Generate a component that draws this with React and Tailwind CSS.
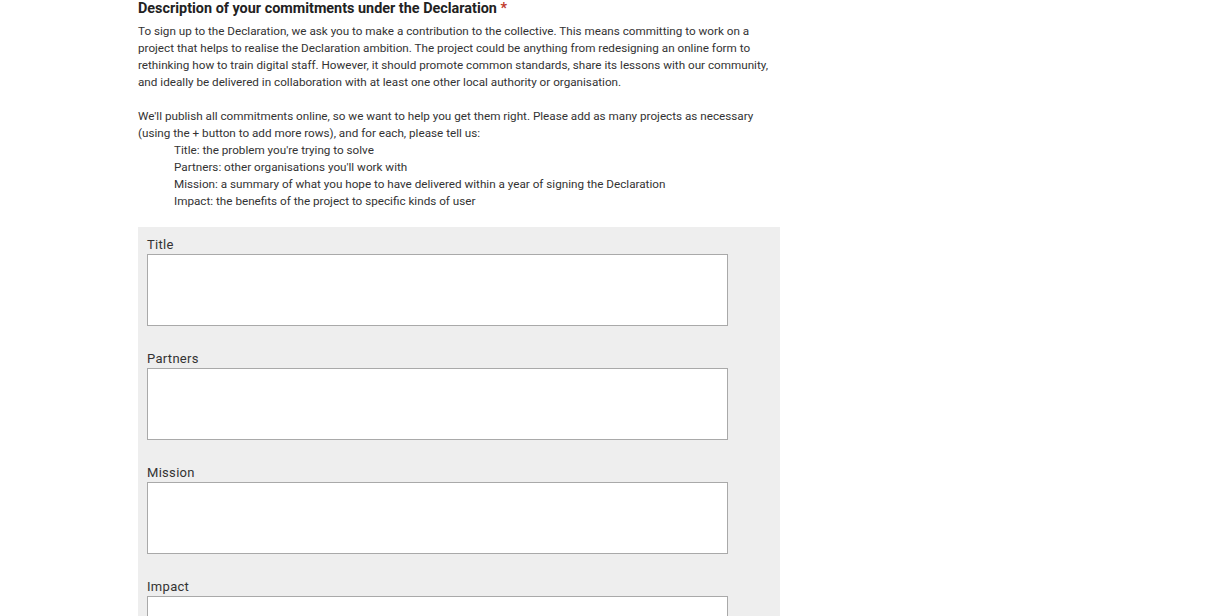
const intro = [
  'To sign up to the Declaration, we ask you to make a contribution to the collective. This means committing to work on a',
  'project that helps to realise the Declaration ambition. The project could be anything from redesigning an online form to',
  'rethinking how to train digital staff. However, it should promote common standards, share its lessons with our community,',
  'and ideally be delivered in collaboration with at least one other local authority or organisation.',
];

const publish = [
  "We'll publish all commitments online, so we want to help you get them right. Please add as many projects as necessary",
  '(using the + button to add more rows), and for each, please tell us:',
];

const items = [
  "Title: the problem you're trying to solve",
  "Partners: other organisations you'll work with",
  'Mission: a summary of what you hope to have delivered within a year of signing the Declaration',
  'Impact: the benefits of the project to specific kinds of user',
];

const fields = ['Title', 'Partners', 'Mission', 'Impact'];

export default function App() {
  return (
    <div className="h-[616px] overflow-hidden bg-white pl-[138px] font-['Roboto',sans-serif] text-[#333333]">
      <div className="w-[642px]">
        <h2 className="pt-[1px] text-[14.4px] leading-[16px] font-bold text-[#222222]">
          Description of your commitments under the Declaration <span className="text-[#c0392b]">*</span>
        </h2>
        <div className="mt-[5.5px] text-[11.7px] leading-[17px] whitespace-nowrap">
          {intro.map((l) => (
            <div key={l}>{l}</div>
          ))}
          <div className="h-[17px]" />
          {publish.map((l) => (
            <div key={l}>{l}</div>
          ))}
          {items.map((l) => (
            <div key={l} className="pl-[36px]">{l}</div>
          ))}
        </div>
        <div className="mt-[17.5px] bg-[#eeeeee] pl-[9px] pt-[9.5px] pb-[40px]">
          {fields.map((f, i) => (
            <div key={f} className={i > 0 ? 'mt-[24.5px]' : ''}>
              <div className="text-[13px] leading-[15px] text-[#333333] tracking-[0.3px]">{f}</div>
              <textarea className="mt-[2.5px] block h-[72px] w-[581px] resize-none border border-[#a9a9a9] bg-white" />
            </div>
          ))}
        </div>
      </div>
    </div>
  );
}
